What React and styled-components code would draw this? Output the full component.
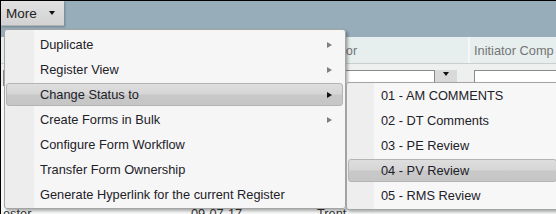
import React from "react";
import styled, { createGlobalStyle } from "styled-components";

const GlobalStyle = createGlobalStyle`
    html, body {
        margin: 0;
        padding: 0;
        background: #ffffff;
    }
    body {
        font-family: "Liberation Sans", Arial, sans-serif;
    }
`;

const Frame = styled.div`
    position: relative;
    width: 555px;
    height: 213px;
    overflow: hidden;
    display: flex;
    flex-direction: column;
    border-top: 1px solid #000;
    border-left: 1px solid #000;
    background: #f6f7f7;
    font-family: "Liberation Sans", Arial, sans-serif;
`;

const Toolbar = styled.div`
    height: 36px;
    flex: none;
    background: #97adba;
    display: flex;
    align-items: flex-start;
`;

const MoreButton = styled.div`
    width: 63px;
    height: 25px;
    box-sizing: border-box;
    display: flex;
    align-items: center;
    justify-content: space-between;
    padding: 0 9px 0 5px;
    background: linear-gradient(#e2e2e2, #d2d2d2);
    border-bottom: 1px solid #b0b4b6;
    box-shadow: 1px 1px 2px rgba(0, 0, 0, 0.25);
    font-size: 13.5px;
    color: #222;
`;

const DownArrow = styled.span`
    width: 0;
    height: 0;
    border-left: 3.5px solid transparent;
    border-right: 3.5px solid transparent;
    border-top: 4px solid #111;
`;

const HeaderRow = styled.div`
    height: 26px;
    flex: none;
    display: flex;
    background: #e6eeee;
`;

const HeaderCell = styled.div`
    width: ${(p) => p.$w}px;
    flex: none;
    box-sizing: border-box;
    padding-left: 4px;
    display: flex;
    align-items: center;
    font-size: 12.8px;
    color: #757575;
    border-right: 2px solid #f4f7f7;
    white-space: nowrap;
`;

const FilterRow = styled.div`
    height: 22px;
    flex: none;
    display: flex;
    align-items: flex-end;
    background: #eef0f0;
    border-top: 1px solid #c9cfd0;
`;

const FilterBox = styled.div`
    width: ${(p) => p.$w}px;
    margin-left: ${(p) => p.$ml || 0}px;
    flex: none;
    height: 16px;
    box-sizing: border-box;
    background: #fff;
    border: 1px solid #8a8a8a;
    border-bottom: none;
`;

const FilterDrop = styled.div`
    width: 22px;
    height: 16px;
    flex: none;
    background: #d9d9d9;
    display: flex;
    justify-content: center;
    padding-top: 2px;
    box-sizing: border-box;
`;

const GridBody = styled.div`
    flex: 1;
    display: flex;
    flex-direction: column;
    justify-content: flex-end;
`;

const DataRow = styled.div`
    height: 14px;
    flex: none;
    display: flex;
    align-items: flex-start;
    padding-top: 6px;
    box-sizing: border-box;
    font-size: 12.8px;
    color: #333;
    overflow: visible;
`;

const DataCell = styled.div`
    width: ${(p) => p.$w}px;
    flex: none;
    padding-left: 2px;
    white-space: nowrap;
`;

const Menu = styled.div`
    position: absolute;
    left: 3px;
    top: 28px;
    width: 342px;
    box-sizing: border-box;
    padding: 3px 2px 2px 1px;
    display: flex;
    flex-direction: column;
    gap: 2px;
    background: linear-gradient(to right, #ededed 0 29px, #f6f6f6 29px);
    border: 1px solid #a4a4a4;
    border-radius: 3px;
    box-shadow: 2px 2px 3px rgba(0, 0, 0, 0.3);
`;

const SubMenu = styled(Menu)`
    left: 345px;
    top: 81px;
    width: 214px;
    padding: 1px 2px 2px 1px;
    background: linear-gradient(to right, #eeeeee 0 27px, #f7f7f7 27px);
`;

const Item = styled.div`
    height: 23px;
    box-sizing: border-box;
    display: flex;
    align-items: center;
    justify-content: space-between;
    padding: 0 10px 0 ${(p) => p.$pl}px;
    font-size: 12.8px;
    color: #1d2128;
    white-space: nowrap;
    border-radius: 3px;
    border: 1px solid ${(p) => (p.$active ? "#b4b4b4" : "transparent")};
    background: ${(p) =>
        p.$active ? "linear-gradient(#dedede, #d6d6d6 45%, #c8c8c8 55%, #c6c6c6)" : "transparent"};
`;

const SideArrow = styled.span`
    width: 0;
    height: 0;
    border-top: 3.5px solid transparent;
    border-bottom: 3.5px solid transparent;
    border-left: 5px solid ${(p) => (p.$active ? "#111" : "#808080")};
`;

const mainItems = [
    { label: "Duplicate", sub: true },
    { label: "Register View", sub: true },
    { label: "Change Status to", sub: true, active: true },
    { label: "Create Forms in Bulk", sub: true },
    { label: "Configure Form Workflow" },
    { label: "Transfer Form Ownership" },
    { label: "Generate Hyperlink for the current Register" },
];

const statusItems = [
    "01 - AM COMMENTS",
    "02 - DT Comments",
    "03 - PE Review",
    "04 - PV Review",
    "05 - RMS Review",
];

export default function App() {
    return (
        <>
            <GlobalStyle />
            <Frame>
                <Toolbar>
                    <MoreButton>
                        More
                        <DownArrow />
                    </MoreButton>
                </Toolbar>
                <HeaderRow>
                    <HeaderCell $w={150}>Form</HeaderCell>
                    <HeaderCell $w={146}>Status</HeaderCell>
                    <HeaderCell $w={173}>Originator</HeaderCell>
                    <HeaderCell $w={120}>Initiator Comp</HeaderCell>
                </HeaderRow>
                <FilterRow>
                    <FilterBox $w={432} $ml={2} />
                    <FilterDrop>
                        <DownArrow />
                    </FilterDrop>
                    <FilterBox $w={100} $ml={17} />
                </FilterRow>
                <GridBody>
                    <DataRow>
                        <DataCell $w={186}>ester</DataCell>
                        <DataCell $w={124}>09-07-17</DataCell>
                        <DataCell $w={160}>Trent</DataCell>
                    </DataRow>
                </GridBody>
                <Menu>
                    {mainItems.map((it) => (
                        <Item key={it.label} $pl={33} $active={it.active}>
                            {it.label}
                            {it.sub && <SideArrow $active={it.active} />}
                        </Item>
                    ))}
                </Menu>
                <SubMenu>
                    {statusItems.map((s) => (
                        <Item key={s} $pl={32} $active={s.startsWith("04")}>
                            {s}
                        </Item>
                    ))}
                </SubMenu>
            </Frame>
        </>
    );
}
